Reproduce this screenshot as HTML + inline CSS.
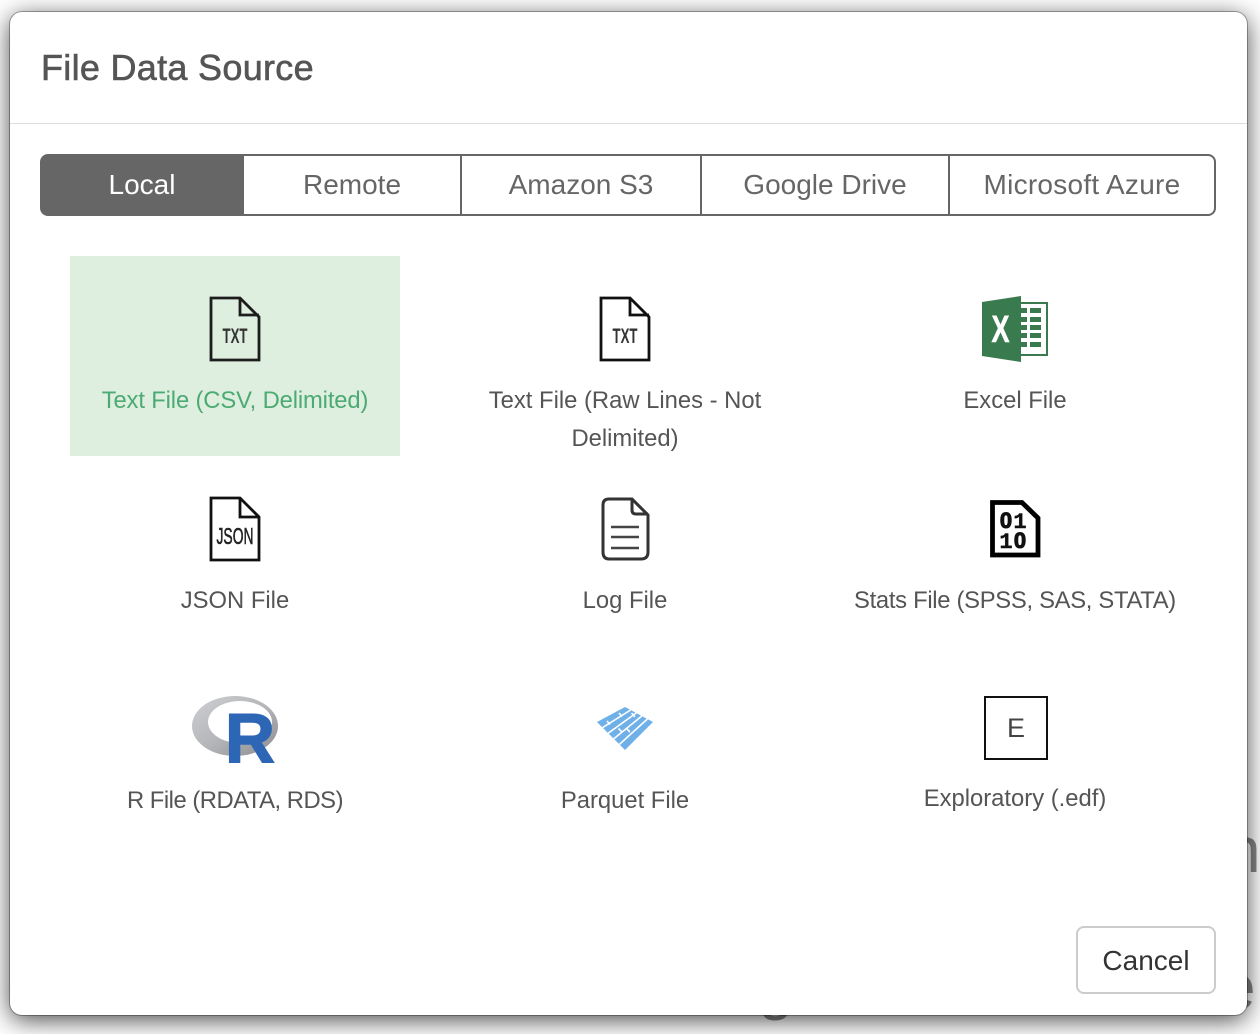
<!DOCTYPE html>
<html><head><meta charset="utf-8">
<style>
html,body{margin:0;padding:0;width:1260px;height:1034px;overflow:hidden;background:#fff;font-family:"Liberation Sans",sans-serif}
.bgt{position:absolute;color:#888;font-size:64px;line-height:64px}
#m{position:absolute;left:10px;top:12px;width:1237px;height:1003px;background:#fff;border-radius:12px;box-shadow:0 0 0 1px rgba(0,0,0,.3),0 5px 25px rgba(0,0,0,.72)}
.a{position:absolute;white-space:nowrap}
.l{position:absolute;text-align:center;font-size:23.8px;line-height:38px;color:#555}
.tab{position:absolute;top:154px;height:62px;box-sizing:border-box;border:2px solid #666;border-left:0;text-align:center;font-size:28px;line-height:58px;color:#666;background:#fff}
svg{position:absolute;overflow:visible}
</style></head><body>
<div class="bgt" style="left:1225px;top:818px">n</div>
<div class="bgt" style="left:1220px;top:955px">e</div>
<div class="bgt" style="left:758px;top:953px">g</div>
<div id="m"></div>
<div class="a" style="left:41px;top:46px;font-size:36px;letter-spacing:.3px;line-height:44px;color:#555;-webkit-text-stroke:.6px #555">File Data Source</div>
<div class="a" style="left:10px;top:123px;width:1237px;height:1px;background:#ddd"></div>

<div class="tab" style="left:40px;width:204px;background:#666;color:#fff;border:0;border-radius:8px 0 0 8px;line-height:62px">Local</div>
<div class="tab" style="left:244px;width:218px">Remote</div>
<div class="tab" style="left:462px;width:240px">Amazon S3</div>
<div class="tab" style="left:702px;width:248px">Google Drive</div>
<div class="tab" style="left:950px;width:266px;border-radius:0 8px 8px 0;letter-spacing:.27px">Microsoft Azure</div>

<div class="a" style="left:70px;top:256px;width:330px;height:200px;background:#dfefdf"></div>

<!-- TXT 1 -->
<svg style="left:205px;top:292px" width="60" height="74" viewBox="0 0 60 74" fill="none">
<path d="M6 6H35L54 25V68H6Z M35 6V23H54" stroke="#1c1c1c" stroke-width="2.8"/>
<text x="30" y="51" text-anchor="middle" font-family="Liberation Sans" font-size="21" font-weight="700" fill="#333" textLength="25" lengthAdjust="spacingAndGlyphs">TXT</text>
</svg>
<div class="l" style="left:70px;top:382px;width:330px;color:#4caa73;letter-spacing:-.14px">Text File (CSV, Delimited)</div>

<!-- TXT 2 -->
<svg style="left:595px;top:292px" width="60" height="74" viewBox="0 0 60 74" fill="none">
<path d="M6 6H35L54 25V68H6Z M35 6V23H54" stroke="#111" stroke-width="2.8"/>
<text x="30" y="51" text-anchor="middle" font-family="Liberation Sans" font-size="21" font-weight="700" fill="#333" textLength="25" lengthAdjust="spacingAndGlyphs">TXT</text>
</svg>
<div class="l" style="left:460px;top:382px;width:330px">Text File (Raw Lines - Not<br>Delimited)</div>

<!-- Excel -->
<svg style="left:980px;top:294px" width="70" height="70" viewBox="0 0 70 70">
<rect x="41" y="8" width="27" height="54" fill="#3a7a4f"/>
<rect x="41" y="10" width="25" height="50" fill="#fff"/>
<g fill="#3a7a4f">
<rect x="50" y="14" width="11" height="5"/><rect x="50" y="23" width="11" height="5"/>
<rect x="50" y="31" width="11" height="5"/><rect x="50" y="39" width="11" height="5"/>
<rect x="50" y="48" width="11" height="5"/>
<rect x="41" y="14" width="6" height="5"/><rect x="41" y="23" width="6" height="5"/>
<rect x="41" y="31" width="6" height="5"/><rect x="41" y="39" width="6" height="5"/>
<rect x="41" y="48" width="6" height="5"/>
</g>
<path d="M2 8L41 2V68L2 62Z" fill="#3a7a4f"/>
<text x="20.500" y="48" text-anchor="middle" font-family="Liberation Sans" font-size="38" font-weight="700" fill="#fff" stroke="#fff" stroke-width=".6" textLength="18" lengthAdjust="spacingAndGlyphs">X</text>
</svg>
<div class="l" style="left:850px;top:382px;width:330px">Excel File</div>

<!-- JSON -->
<svg style="left:205px;top:492px" width="60" height="74" viewBox="0 0 60 74" fill="none">
<path d="M6 6H35L54 25V68H6Z M35 6V25H54" stroke="#111" stroke-width="2.8"/>
<text x="30" y="52" text-anchor="middle" font-family="Liberation Sans" font-size="23" fill="#222" stroke="#222" stroke-width=".6" textLength="37" lengthAdjust="spacingAndGlyphs">JSON</text>
</svg>
<div class="l" style="left:70px;top:582px;width:330px">JSON File</div>

<!-- Log -->
<svg style="left:595px;top:492px" width="60" height="74" viewBox="0 0 60 74" fill="none">
<path d="M14 7H37L53 23V60Q53 67 46 67H14Q8 67 8 60V13Q8 7 14 7Z" stroke="#333" stroke-width="3"/>
<path d="M37 7V18Q37 22 41 22H53" stroke="#333" stroke-width="3"/>
<path d="M16 35H44M16 45H44M16 56H44" stroke="#444" stroke-width="2.600"/>
</svg>
<div class="l" style="left:460px;top:582px;width:330px">Log File</div>

<!-- Stats -->
<svg style="left:985px;top:492px" width="60" height="74" viewBox="0 0 60 74" fill="none">
<path d="M7.500 10.500H37L53 26V63H7.500Z" stroke="#000" stroke-width="4.800"/>
<g font-weight="700" fill="#111" font-size="22" text-anchor="middle">
<text x="21" y="36" font-family="Liberation Sans" stroke="#111" stroke-width="1">0</text>
<text x="35" y="36" font-family="Liberation Mono" stroke="#111" stroke-width=".4">1</text>
<text x="21" y="56" font-family="Liberation Mono" stroke="#111" stroke-width=".4">1</text>
<text x="35" y="56" font-family="Liberation Sans" stroke="#111" stroke-width="1">0</text>
</g>
</svg>
<div class="l" style="left:815px;top:582px;width:400px;white-space:nowrap;letter-spacing:-.3px">Stats File (SPSS, SAS, STATA)</div>

<!-- R -->
<svg style="left:190px;top:694px" width="90" height="70" viewBox="0 0 90 70">
<defs><linearGradient id="g" x1="0" y1="0" x2="1" y2="1"><stop offset="0" stop-color="#cfd0d3"/><stop offset=".5" stop-color="#b5b6b9"/><stop offset="1" stop-color="#8b8c8f"/></linearGradient></defs>
<path fill-rule="evenodd" d="M2 32a43 30 0 1 0 86 0a43 30 0 1 0 -86 0ZM18 28a32 21 0 1 0 64 0a32 21 0 1 0 -64 0Z" fill="url(#g)"/>
<text x="35" y="68" font-family="Liberation Sans" font-size="70" font-weight="700" fill="#2d66b5" stroke="#2d66b5" stroke-width="1.400" textLength="50" lengthAdjust="spacingAndGlyphs">R</text>
</svg>
<div class="l" style="left:70px;top:782px;width:330px;letter-spacing:-.48px">R File (RDATA, RDS)</div>

<!-- Parquet -->
<svg style="left:590px;top:700px" width="70" height="56" viewBox="0 0 70 56" fill="none">
<path d="M7 22L35 7L63 22L35 50Z" fill="#6fb0e8"/>
<g stroke="#fff" stroke-width="1.600">
<path d="M12.600 27.600L40.600 10M18.200 33.200L46.200 13M23.800 38.800L51.800 16M29.400 44.400L57.400 19"/>
<path d="M29 13L32 16.500M41.500 13L45 17M28.500 28.500L32 32M17 21L20 24.500M37 29L40 32"/>
</g>
</svg>
<div class="l" style="left:460px;top:782px;width:330px">Parquet File</div>

<!-- Exploratory -->
<div class="a" style="left:984px;top:696px;width:64px;height:64px;box-sizing:border-box;border:2px solid #111;text-align:center;font-size:27px;line-height:60px;color:#444">E</div>
<div class="l" style="left:850px;top:780px;width:330px">Exploratory (.edf)</div>

<div class="a" style="left:1076px;top:926px;width:140px;height:68px;box-sizing:border-box;border:2px solid #ccc;border-radius:8px;text-align:center;font-size:28px;line-height:65px;color:#333;background:#fff">Cancel</div>
</body></html>
